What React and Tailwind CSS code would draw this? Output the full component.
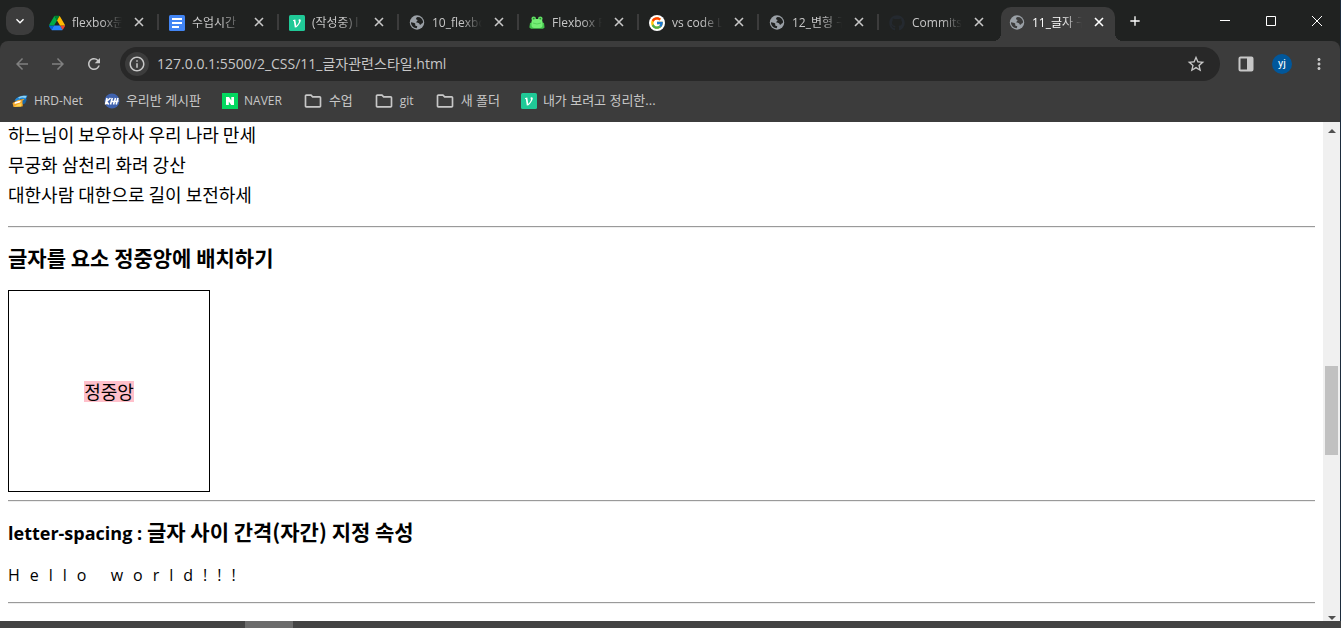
import React from "react";
import { FcGoogle } from "react-icons/fc";
import { FaGithub } from "react-icons/fa";
import {
  MdAdd,
  MdArrowBack,
  MdArrowForward,
  MdInfoOutline,
  MdKeyboardArrowDown,
  MdMoreVert,
  MdOutlineFolder,
  MdRefresh,
  MdStarBorder,
} from "react-icons/md";

function DriveIcon() {
  return (
    <svg width="16" height="16" viewBox="0 0 87 78" aria-hidden="true">
      <path d="M6.6 66.9l3.9 6.6c.8 1.4 2 2.5 3.3 3.3L27.5 53H0c0 1.6.4 3.1 1.2 4.5z" fill="#0066da" />
      <path d="M43.7 25L29.9 1.2c-1.4.8-2.5 1.9-3.3 3.3L1.2 48.5C.4 49.9 0 51.5 0 53h27.5z" fill="#00ac47" />
      <path d="M73.6 76.8c1.3-.8 2.5-1.9 3.3-3.3l9.2-16c.8-1.4 1.2-3 1.2-4.5H59.8l5.9 11.5z" fill="#ea4335" />
      <path d="M43.7 25L57.4 1.2C56.1.4 54.5 0 52.9 0H34.4c-1.6 0-3.2.4-4.5 1.2z" fill="#00832d" />
      <path d="M59.8 53H27.5L13.8 76.8c1.3.8 2.9 1.2 4.5 1.2h50.8c1.6 0 3.2-.4 4.5-1.2z" fill="#2684fc" />
      <path d="M73.4 26.5L60.7 4.5c-.8-1.4-2-2.5-3.3-3.3L43.7 25l16.1 28h27.5c0-1.6-.4-3.1-1.2-4.5z" fill="#ffba00" />
    </svg>
  );
}

function DocsIcon() {
  return (
    <svg width="16" height="16" viewBox="0 0 16 16" aria-hidden="true">
      <rect width="16" height="16" rx="1.5" fill="#4285f4" />
      <path d="M3 4h10M3 8h10M3 12h7" stroke="#fff" strokeWidth="2" />
    </svg>
  );
}

function VelogIcon() {
  return (
    <svg width="16" height="16" viewBox="0 0 16 16" aria-hidden="true">
      <rect width="16" height="16" rx="1.5" fill="#20c997" />
      <path
        d="M4.2 4.9l2.1-.5 1 6.5c1.6-1.9 2.6-3.4 2.7-4.5 0-.7-.7-1-.5-1.6.2-.7 2.3-.8 2.3.7 0 1.9-2.3 4.8-4.3 6.8l-1.7.1-1-6.4-.9.1z"
        fill="#fff"
      />
    </svg>
  );
}

function GlobeIcon({ land }) {
  return (
    <svg width="16" height="16" viewBox="0 0 16 16" aria-hidden="true">
      <circle cx="8" cy="7.5" r="7.2" fill="#9aa0a6" />
      <path
        d="M8.6 2.1c-1.5.4-1.6 1.3-1.4 2 .2.8 1 .6 1.3 1.2.2.7-1.3 1-1.1 2 .2.8 1.8.4 2.6 1 .7.6.4 1.5 1.3 1.5 1 0 1-1.3 2.1-1.5.5-.1.7-.9.6-1.7-.4-2.6-2.7-4.6-5.4-4.5z"
        fill={land}
      />
      <path
        d="M2 7.2c1.5.5 3.3.2 4.1 1.2.6.9-.3 1.4.2 2 .6.6 1.6.2 1.9.9.2.7-.5 1.3-.3 1.9C4.7 13.2 1.8 10.4 2 7.2z"
        fill={land}
      />
    </svg>
  );
}

function FrogIcon() {
  return (
    <svg width="16" height="16" viewBox="0 0 16 16" aria-hidden="true">
      <path d="M1 8l3-1h8l3 1 .6 4.5-1.6 1.3H2L.4 12.5z" fill="#43c44c" />
      <circle cx="4.7" cy="3.8" r="2.3" fill="#5fdc62" />
      <circle cx="11.3" cy="3.8" r="2.3" fill="#5fdc62" />
      <rect x="2.5" y="4" width="11" height="9" rx="3" fill="#75ee75" />
      <circle cx="4.8" cy="3.7" r=".8" fill="#1f7a2a" />
      <circle cx="11.2" cy="3.7" r=".8" fill="#1f7a2a" />
      <path d="M4 8q4 2 8 0" fill="none" stroke="#4ccc52" strokeWidth=".8" />
    </svg>
  );
}

function HrdIcon() {
  return (
    <svg width="16" height="16" viewBox="0 0 16 16" aria-hidden="true">
      <path d="M2.5 7.5q3-5.5 13-5L13.500 7l-5-1L6 8.500z" fill="#2389d7" />
      <path d="M6 4.5q4-2.5 8.500-1.500l-1 2q-4-1-6 .5z" fill="#8fd3f5" />
      <path d="M.5 10L6 7l6-1-1.5 7.5-9 .5z" fill="#f3a72b" />
      <path d="M3 9l6-1.5-1 2-5.5 1.5z" fill="#fff" />
      <path d="M5.5 11.5l4-1.5-.5 3.5-7 .2z" fill="#ffd34d" />
      <path d="M10.5 7.5L15 6l-2 4.5-2.5 1z" fill="#1667ab" />
    </svg>
  );
}

function KhIcon() {
  return (
    <svg width="16" height="16" viewBox="0 0 16 16" aria-hidden="true">
      <circle cx="8" cy="8" r="7.5" fill="#3f62ae" />
      <path
        d="M3 5L1.5 11.5M6.5 5l-4 3.5 2.2 3M8.3 5L6.5 11.5M11.5 5L9.5 11.5M7.5 8.5h3M14 5l-1.8 6.5M11 8.5l3.5-.5"
        fill="none"
        stroke="#fff"
        strokeWidth="1.6"
      />
    </svg>
  );
}

function NaverIcon() {
  return (
    <svg width="16" height="16" viewBox="0 0 16 16" aria-hidden="true">
      <rect width="16" height="16" fill="#03d860" />
      <path d="M4 4h3l2.3 3.5V4H12v8H9.2L6.8 8.5V12H4z" fill="#fff" />
    </svg>
  );
}

function SidePanelIcon() {
  return (
    <svg width="16" height="16" viewBox="0 0 16 16" aria-hidden="true">
      <rect x="1.5" y="1.5" width="13" height="13" rx="1" fill="none" stroke="#c7c7c7" strokeWidth="2" />
      <path d="M9 1h6v14H9z" fill="#c7c7c7" />
    </svg>
  );
}

function CloseIcon() {
  return (
    <svg width="14" height="14" viewBox="0 0 14 14" aria-hidden="true">
      <path d="M3 3l8 8M11 3l-8 8" stroke="currentColor" strokeWidth="1.6" />
    </svg>
  );
}

const tabs = [
  { title: "flexbox문", icon: <DriveIcon /> },
  { title: "수업시간", icon: <DocsIcon /> },
  { title: "(작성중) l", icon: <VelogIcon /> },
  { title: "10_flexbo", icon: <GlobeIcon land="#202221" /> },
  { title: "Flexbox F", icon: <FrogIcon /> },
  {
    title: "vs code L",
    icon: (
      <span className="flex size-4 items-center justify-center rounded-full bg-white">
        <FcGoogle size={14} />
      </span>
    ),
  },
  { title: "12_변형 구", icon: <GlobeIcon land="#202221" /> },
  { title: "Commits", icon: <FaGithub size={16} className="text-[#24292f]" />, last: true },
  { title: "11_글자 구", icon: <GlobeIcon land="#3c3c3c" />, active: true },
];

const folder = <MdOutlineFolder size={20} className="text-[#c7c7c7]" />;

const bookmarks = [
  { name: "HRD-Net", icon: <HrdIcon /> },
  { name: "우리반 게시판", icon: <KhIcon />, hangul: true },
  { name: "NAVER", icon: <NaverIcon /> },
  { name: "수업", icon: folder, hangul: true },
  { name: "git", icon: folder },
  { name: "새 폴더", icon: folder, hangul: true },
  { name: "내가 보려고 정리한...", icon: <VelogIcon />, hangul: true },
];

function Tab({ title, icon, active, last }) {
  return (
    <div
      className={
        active
          ? "relative flex h-[34px] w-[114px] shrink-0 items-center rounded-t-[10px] bg-[#3c3c3c] pb-1 pl-2 text-white"
          : "flex h-[34px] w-[120px] shrink-0 items-center pb-1 pl-2 text-[#c7c7c7]"
      }
    >
      {active && (
        <>
          <span className="absolute bottom-0 -left-2 size-2 bg-[radial-gradient(circle_at_top_left,transparent_8px,#3c3c3c_8px)]" />
          <span className="absolute -right-2 bottom-0 size-2 bg-[radial-gradient(circle_at_top_right,transparent_8px,#3c3c3c_8px)]" />
        </>
      )}
      <button className="flex items-center gap-[7px] pt-px text-xs">
        {icon}
        <span className="w-[50px] text-left whitespace-nowrap [mask-image:linear-gradient(to_right,black_60%,transparent)]">
          {title}
        </span>
      </button>
      <button aria-label="탭 닫기" className="ml-2.5">
        <CloseIcon />
      </button>
      {!active && !last && <span className="mr-0.5 ml-auto h-4 w-0.5 bg-[#3c3c3c]" />}
    </div>
  );
}

function TabStrip() {
  return (
    <div className="flex h-[41px] items-end bg-[#202221] pl-1.5">
      <button
        aria-label="탭 검색"
        className="mb-1.5 flex size-7 shrink-0 items-center justify-center rounded-[10px] bg-[#3c3c3c] text-white"
      >
        <MdKeyboardArrowDown size={16} />
      </button>
      <div className="flex pl-[7px]">
        {tabs.map((tab) => (
          <Tab key={tab.title} {...tab} />
        ))}
      </div>
      <button aria-label="새 탭" className="ml-3 flex h-10 items-center text-white">
        <MdAdd size={16} />
      </button>
      <div className="ml-auto flex h-full items-center text-white">
        <button aria-label="최소화" className="flex w-[46px] justify-center">
          <svg width="10" height="10" viewBox="0 0 10 10">
            <path d="M0 4.5h10" stroke="currentColor" />
          </svg>
        </button>
        <button aria-label="최대화" className="flex w-[46px] justify-center">
          <svg width="10" height="10" viewBox="0 0 10 10">
            <path d="M.5.5h9v9h-9z" fill="none" stroke="currentColor" />
          </svg>
        </button>
        <button aria-label="닫기" className="flex w-[46px] justify-center">
          <svg width="10" height="10" viewBox="0 0 10 10">
            <path d="M0 0l10 10M10 0L0 10" stroke="currentColor" />
          </svg>
        </button>
      </div>
    </div>
  );
}

function Toolbar() {
  return (
    <div className="flex items-center pt-1.5 pr-3 pl-3 text-[#c7c7c7]">
      <button aria-label="뒤로" className="w-9 pl-px text-[#808080]">
        <MdArrowBack size={18} />
      </button>
      <button aria-label="앞으로" className="w-9 pl-px text-[#808080]">
        <MdArrowForward size={18} />
      </button>
      <button aria-label="새로고침" className="w-9 pl-px">
        <MdRefresh size={18} />
      </button>
      <div className="flex h-[34px] flex-1 items-center rounded-full bg-[#282828] pr-3.5 pl-[5px]">
        <button
          aria-label="사이트 정보 보기"
          className="flex size-6 items-center justify-center rounded-full bg-[#3c3c3c]"
        >
          <MdInfoOutline size={18} />
        </button>
        <div className="ml-2 flex-1 text-sm text-[#c7c7c7]">
          <input
            aria-label="주소창"
            defaultValue="127.0.0.1:5500/2_CSS/11_글자관련스타일.html"
            className="w-full bg-transparent outline-none"
          />
        </div>
        <button aria-label="북마크 추가">
          <MdStarBorder size={20} />
        </button>
      </div>
      <div className="flex items-center gap-[18px] pl-[18px]">
        <button aria-label="측면 패널">
          <SidePanelIcon />
        </button>
        <button className="flex size-5 items-center justify-center rounded-full bg-[#01579b] font-['Roboto',sans-serif] text-[11px] text-white">
          yj
        </button>
        <button aria-label="메뉴">
          <MdMoreVert size={18} />
        </button>
      </div>
    </div>
  );
}

function BookmarkBar() {
  return (
    <nav className="flex h-[41px] items-center gap-[21px] pb-0.5 pl-3 text-[#c7c7c7]">
      {bookmarks.map((item) => (
        <a key={item.name} href="#" className="flex items-center gap-1.5 whitespace-nowrap">
          {item.icon}
          <span className={item.hangul ? "text-[13px]" : "text-xs"}>{item.name}</span>
        </a>
      ))}
    </nav>
  );
}

function Divider() {
  return <hr className="border-t border-b border-t-[#9a9a9a] border-b-[#eeeeee]" />;
}

function Page() {
  return (
    <main className="-mt-[3px] flex-1 px-2 font-['Noto_Sans_CJK_KR',sans-serif] text-lg text-black">
      <p className="leading-[30px]">
        하느님이 보우하사 우리 나라 만세
        <br />
        무궁화 삼천리 화려 강산
        <br />
        대한사람 대한으로 길이 보전하세
      </p>
      <div className="pt-[17px]">
        <Divider />
      </div>
      <h3 className="pt-4 pb-5 text-[21px] leading-[26px] font-bold">글자를 요소 정중앙에 배치하기</h3>
      <div className="mb-2 flex size-[202px] items-center justify-center border border-black">
        <span className="bg-[#ffc0cb] leading-[21px]">정중앙</span>
      </div>
      <Divider />
      <h3 className="pt-4 pb-5 text-[21px] leading-[26px] font-bold">
        <span className="font-['Open_Sans',sans-serif] text-lg leading-none">letter-spacing :</span>{" "}
        글자 사이 간격(자간) 지정 속성
      </h3>
      <p className="pb-4 font-['Open_Sans',sans-serif] text-base leading-[22px] tracking-[10px]">
        Hello world!!!
      </p>
      <Divider />
    </main>
  );
}

function Scrollbar() {
  return (
    <div className="flex w-[17px] flex-col items-center bg-[#f0f0f0] pt-[7px] pb-px" aria-hidden="true">
      <svg width="8" height="4" viewBox="0 0 8 4">
        <path d="M0 4l4-4 4 4z" fill="#505050" />
      </svg>
      <div className="flex-[233]" />
      <div className="h-[89px] w-[13px] bg-[#c1c1c1]" />
      <div className="flex-[161]" />
      <svg width="8" height="4" viewBox="0 0 8 4">
        <path d="M0 0l4 4 4-4z" fill="#505050" />
      </svg>
    </div>
  );
}

function App() {
  return (
    <div className="flex h-screen flex-col overflow-hidden bg-[#202221] font-['Open_Sans','Noto_Sans_CJK_KR',sans-serif]">
      <div className="flex min-h-0 flex-1 flex-col border-r border-[#1b2b3c]">
        <TabStrip />
        <div className="rounded-t-lg bg-[#3c3c3c]">
          <Toolbar />
          <BookmarkBar />
        </div>
        <div className="flex min-h-0 flex-1 overflow-hidden bg-white">
          <Page />
          <Scrollbar />
        </div>
      </div>
      <div className="h-[7px] shrink-0 bg-[#434343] pl-[245px]">
        <div className="h-full w-12 bg-[#6b6b6b]" />
      </div>
    </div>
  );
}

export default App;
